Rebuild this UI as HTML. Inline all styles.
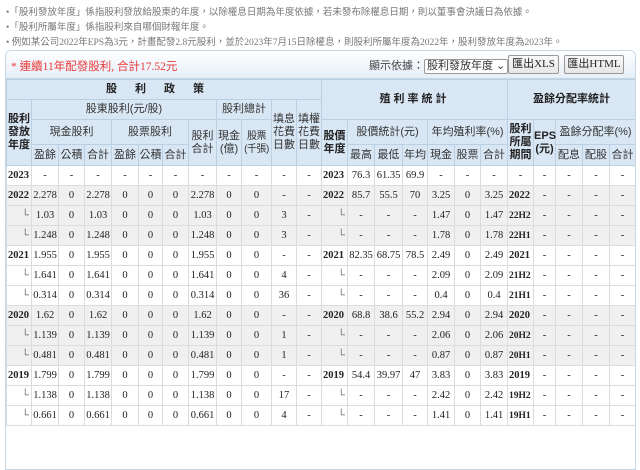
<!DOCTYPE html>
<html><head><meta charset="utf-8"><style>
*{margin:0;padding:0;box-sizing:border-box}
body{width:640px;height:426px;overflow:hidden;background:#fff;font-family:"Liberation Sans","Noto Sans CJK TC",sans-serif;}
.notes{position:absolute;left:6px;top:6px;font-size:9.5px;color:#777;line-height:15px;font-family:"Liberation Serif","Noto Sans CJK TC",serif}
.box{position:absolute;left:5px;top:50px;width:631px;height:420px;border:1px solid #c5d6e6;border-radius:6px 6px 0 0;overflow:hidden}
.bar{height:28px;background:linear-gradient(#fff,#e6eef7);position:relative;border-bottom:1px solid #c5d6e6}
.red{position:absolute;left:5px;top:7px;color:#e83a3a;font-size:11.5px;font-family:"Liberation Serif","Noto Sans CJK TC",serif}
.sel{position:absolute;left:363px;top:6px;font-size:11px;color:#444}
.sel span{display:inline-block;border:1px solid #999;border-radius:2px;padding:0 2px;background:#fff;height:15px;line-height:13px;color:#333}
.btn{position:absolute;top:4px;height:19px;border:1px solid #999;border-radius:2px;background:linear-gradient(#fafafa,#e6e6e6);font-size:11px;line-height:17px;text-align:center;font-family:"Liberation Serif","Noto Sans CJK TC",serif;color:#222}
table{border-collapse:collapse;table-layout:fixed;width:629px;position:absolute;left:0;top:28px}
th{background:#d9e7f5;border:1px solid #bcd0e4;font-weight:normal;font-size:11px;color:#333;line-height:13px;padding:0}
th.b{font-weight:bold;color:#222}
td{border:1px solid #dcdcdc;font-size:10.5px;height:20px;text-align:center;font-family:"Liberation Serif","Noto Sans CJK TC",serif;color:#222;padding:0;white-space:nowrap}
td.y{font-weight:bold;text-align:left;padding-left:1px}
td.s{text-align:right;padding-right:2px;color:#666}
tr.g td{background:#f0f0f0}
tr.t td{border-top:1px solid #cfcfcf}
</style></head><body>
<div class="notes">•「股利發放年度」係指股利發放給股東的年度，以除權息日期為年度依據，若未發布除權息日期，則以董事會決議日為依據。<br>•「股利所屬年度」係指股利來自哪個財報年度。<br>• 例如某公司2022年EPS為3元，計畫配發2.8元股利，並於2023年7月15日除權息，則股利所屬年度為2022年，股利發放年度為2023年。</div>
<div class="box">
<div class="bar"><div class="red">* 連續11年配發股利, 合計17.52元</div>
<div class="sel">顯示依據：<span>股利發放年度 ⌄</span></div>
<div class="btn" style="left:502px;width:51px">匯出XLS</div>
<div class="btn" style="left:558px;width:60px">匯出HTML</div></div>
<table>
<colgroup><col style="width:25px"><col style="width:27px"><col style="width:26px"><col style="width:27px"><col style="width:27px"><col style="width:24px"><col style="width:26px"><col style="width:28px"><col style="width:25px"><col style="width:30px"><col style="width:25px"><col style="width:25px"><col style="width:26px"><col style="width:27px"><col style="width:28px"><col style="width:25px"><col style="width:27px"><col style="width:26px"><col style="width:27px"><col style="width:26px"><col style="width:22px"><col style="width:27px"><col style="width:27px"><col style="width:26px"></colgroup>
<tr style="height:20px"><th class="b" colspan="12" style="letter-spacing:18px">股利政策</th><th class="b" colspan="7" rowspan="2" style="letter-spacing:3px">殖利率統計</th><th class="b" colspan="5" rowspan="2">盈餘分配率統計</th></tr>
<tr style="height:20px"><th class="b" rowspan="3">股利<br>發放<br>年度</th><th colspan="7">股東股利(元/股)</th><th colspan="2">股利總計</th><th rowspan="3">填息<br>花費<br>日數</th><th rowspan="3">填權<br>花費<br>日數</th></tr>
<tr style="height:25px"><th colspan="3">現金股利</th><th colspan="3">股票股利</th><th rowspan="2">股利<br>合計</th><th rowspan="2">現金<br>(億)</th><th rowspan="2" style="font-size:10px;letter-spacing:-0.5px">股票<br>(千張)</th><th class="b" rowspan="2">股價<br>年度</th><th colspan="3">股價統計(元)</th><th colspan="3">年均殖利率(%)</th><th class="b" rowspan="2">股利<br>所屬<br>期間</th><th class="b" rowspan="2">EPS<br>(元)</th><th colspan="3">盈餘分配率(%)</th></tr>
<tr style="height:21px"><th>盈餘</th><th>公積</th><th>合計</th><th>盈餘</th><th>公積</th><th>合計</th><th>最高</th><th>最低</th><th>年均</th><th>現金</th><th>股票</th><th>合計</th><th>配息</th><th>配股</th><th>合計</th></tr>
<tr class="t"><td class="y">2023</td><td>-</td><td>-</td><td>-</td><td>-</td><td>-</td><td>-</td><td>-</td><td>-</td><td>-</td><td>-</td><td>-</td><td class="y">2023</td><td>76.3</td><td>61.35</td><td>69.9</td><td>-</td><td>-</td><td>-</td><td>-</td><td>-</td><td>-</td><td>-</td><td>-</td></tr>
<tr class="g t"><td class="y">2022</td><td>2.278</td><td>0</td><td>2.278</td><td>0</td><td>0</td><td>0</td><td>2.278</td><td>0</td><td>0</td><td>-</td><td>-</td><td class="y">2022</td><td>85.7</td><td>55.5</td><td>70</td><td>3.25</td><td>0</td><td>3.25</td><td class="y">2022</td><td>-</td><td>-</td><td>-</td><td>-</td></tr>
<tr class="g"><td class="s">└</td><td>1.03</td><td>0</td><td>1.03</td><td>0</td><td>0</td><td>0</td><td>1.03</td><td>0</td><td>0</td><td>3</td><td>-</td><td class="s">└</td><td>-</td><td>-</td><td>-</td><td>1.47</td><td>0</td><td>1.47</td><td class="y" style="font-size:9.5px">22H2</td><td>-</td><td>-</td><td>-</td><td>-</td></tr>
<tr class="g"><td class="s">└</td><td>1.248</td><td>0</td><td>1.248</td><td>0</td><td>0</td><td>0</td><td>1.248</td><td>0</td><td>0</td><td>3</td><td>-</td><td class="s">└</td><td>-</td><td>-</td><td>-</td><td>1.78</td><td>0</td><td>1.78</td><td class="y" style="font-size:9.5px">22H1</td><td>-</td><td>-</td><td>-</td><td>-</td></tr>
<tr class="t"><td class="y">2021</td><td>1.955</td><td>0</td><td>1.955</td><td>0</td><td>0</td><td>0</td><td>1.955</td><td>0</td><td>0</td><td>-</td><td>-</td><td class="y">2021</td><td>82.35</td><td>68.75</td><td>78.5</td><td>2.49</td><td>0</td><td>2.49</td><td class="y">2021</td><td>-</td><td>-</td><td>-</td><td>-</td></tr>
<tr><td class="s">└</td><td>1.641</td><td>0</td><td>1.641</td><td>0</td><td>0</td><td>0</td><td>1.641</td><td>0</td><td>0</td><td>4</td><td>-</td><td class="s">└</td><td>-</td><td>-</td><td>-</td><td>2.09</td><td>0</td><td>2.09</td><td class="y" style="font-size:9.5px">21H2</td><td>-</td><td>-</td><td>-</td><td>-</td></tr>
<tr><td class="s">└</td><td>0.314</td><td>0</td><td>0.314</td><td>0</td><td>0</td><td>0</td><td>0.314</td><td>0</td><td>0</td><td>36</td><td>-</td><td class="s">└</td><td>-</td><td>-</td><td>-</td><td>0.4</td><td>0</td><td>0.4</td><td class="y" style="font-size:9.5px">21H1</td><td>-</td><td>-</td><td>-</td><td>-</td></tr>
<tr class="g t"><td class="y">2020</td><td>1.62</td><td>0</td><td>1.62</td><td>0</td><td>0</td><td>0</td><td>1.62</td><td>0</td><td>0</td><td>-</td><td>-</td><td class="y">2020</td><td>68.8</td><td>38.6</td><td>55.2</td><td>2.94</td><td>0</td><td>2.94</td><td class="y">2020</td><td>-</td><td>-</td><td>-</td><td>-</td></tr>
<tr class="g"><td class="s">└</td><td>1.139</td><td>0</td><td>1.139</td><td>0</td><td>0</td><td>0</td><td>1.139</td><td>0</td><td>0</td><td>1</td><td>-</td><td class="s">└</td><td>-</td><td>-</td><td>-</td><td>2.06</td><td>0</td><td>2.06</td><td class="y" style="font-size:9.5px">20H2</td><td>-</td><td>-</td><td>-</td><td>-</td></tr>
<tr class="g"><td class="s">└</td><td>0.481</td><td>0</td><td>0.481</td><td>0</td><td>0</td><td>0</td><td>0.481</td><td>0</td><td>0</td><td>1</td><td>-</td><td class="s">└</td><td>-</td><td>-</td><td>-</td><td>0.87</td><td>0</td><td>0.87</td><td class="y" style="font-size:9.5px">20H1</td><td>-</td><td>-</td><td>-</td><td>-</td></tr>
<tr class="t"><td class="y">2019</td><td>1.799</td><td>0</td><td>1.799</td><td>0</td><td>0</td><td>0</td><td>1.799</td><td>0</td><td>0</td><td>-</td><td>-</td><td class="y">2019</td><td>54.4</td><td>39.97</td><td>47</td><td>3.83</td><td>0</td><td>3.83</td><td class="y">2019</td><td>-</td><td>-</td><td>-</td><td>-</td></tr>
<tr><td class="s">└</td><td>1.138</td><td>0</td><td>1.138</td><td>0</td><td>0</td><td>0</td><td>1.138</td><td>0</td><td>0</td><td>17</td><td>-</td><td class="s">└</td><td>-</td><td>-</td><td>-</td><td>2.42</td><td>0</td><td>2.42</td><td class="y" style="font-size:9.5px">19H2</td><td>-</td><td>-</td><td>-</td><td>-</td></tr>
<tr><td class="s">└</td><td>0.661</td><td>0</td><td>0.661</td><td>0</td><td>0</td><td>0</td><td>0.661</td><td>0</td><td>0</td><td>4</td><td>-</td><td class="s">└</td><td>-</td><td>-</td><td>-</td><td>1.41</td><td>0</td><td>1.41</td><td class="y" style="font-size:9.5px">19H1</td><td>-</td><td>-</td><td>-</td><td>-</td></tr>
</table>
</div>
</body></html>
